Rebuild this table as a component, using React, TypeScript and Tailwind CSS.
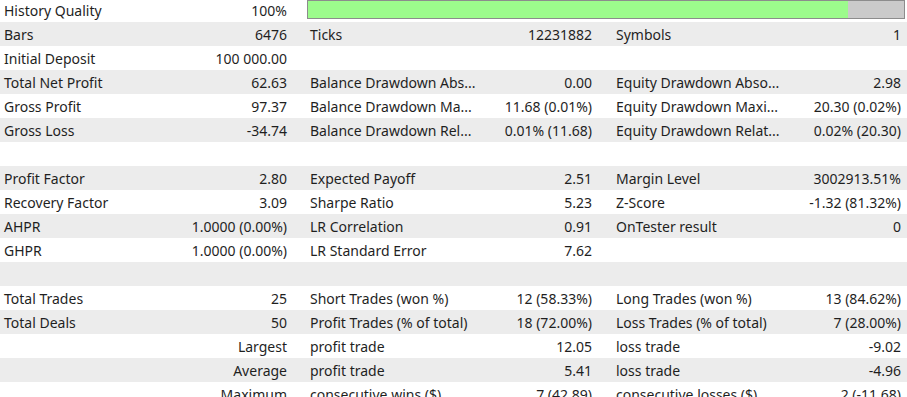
type Cell = { label?: string; value?: string };
type Row = { cells: [Cell, Cell, Cell]; shaded: boolean };

const r = (shaded: boolean, a: Cell, b: Cell = {}, c: Cell = {}): Row => ({ cells: [a, b, c], shaded });

const rows: Row[] = [
  r(true, { label: 'Bars', value: '6476' }, { label: 'Ticks', value: '12231882' }, { label: 'Symbols', value: '1' }),
  r(false, { label: 'Initial Deposit', value: '100 000.00' }),
  r(
    true,
    { label: 'Total Net Profit', value: '62.63' },
    { label: 'Balance Drawdown Abs...', value: '0.00' },
    { label: 'Equity Drawdown Abso...', value: '2.98' }
  ),
  r(
    false,
    { label: 'Gross Profit', value: '97.37' },
    { label: 'Balance Drawdown Ma...', value: '11.68 (0.01%)' },
    { label: 'Equity Drawdown Maxi...', value: '20.30 (0.02%)' }
  ),
  r(
    true,
    { label: 'Gross Loss', value: '-34.74' },
    { label: 'Balance Drawdown Rel...', value: '0.01% (11.68)' },
    { label: 'Equity Drawdown Relat...', value: '0.02% (20.30)' }
  ),
  r(false, {}),
  r(
    true,
    { label: 'Profit Factor', value: '2.80' },
    { label: 'Expected Payoff', value: '2.51' },
    { label: 'Margin Level', value: '3002913.51%' }
  ),
  r(
    false,
    { label: 'Recovery Factor', value: '3.09' },
    { label: 'Sharpe Ratio', value: '5.23' },
    { label: 'Z-Score', value: '-1.32 (81.32%)' }
  ),
  r(
    true,
    { label: 'AHPR', value: '1.0000 (0.00%)' },
    { label: 'LR Correlation', value: '0.91' },
    { label: 'OnTester result', value: '0' }
  ),
  r(false, { label: 'GHPR', value: '1.0000 (0.00%)' }, { label: 'LR Standard Error', value: '7.62' }),
  r(true, {}),
  r(
    false,
    { label: 'Total Trades', value: '25' },
    { label: 'Short Trades (won %)', value: '12 (58.33%)' },
    { label: 'Long Trades (won %)', value: '13 (84.62%)' }
  ),
  r(
    true,
    { label: 'Total Deals', value: '50' },
    { label: 'Profit Trades (% of total)', value: '18 (72.00%)' },
    { label: 'Loss Trades (% of total)', value: '7 (28.00%)' }
  ),
  r(false, { value: 'Largest' }, { label: 'profit trade', value: '12.05' }, { label: 'loss trade', value: '-9.02' }),
  r(true, { value: 'Average' }, { label: 'profit trade', value: '5.41' }, { label: 'loss trade', value: '-4.96' }),
  r(
    false,
    { value: 'Maximum' },
    { label: 'consecutive wins ($)', value: '7 (42.89)' },
    { label: 'consecutive losses ($)', value: '2 (-11.68)' }
  ),
];

// padding right per column so values end where the tester report puts them
const cellPad = ['pl-1 pr-[19px]', 'pl-1 pr-[20px]', 'pl-1 pr-[6px]'];

function StatCell({ cell, pad }: { cell: Cell; pad: string }) {
  return (
    <div className={`flex items-center justify-between whitespace-nowrap ${pad}`}>
      <span>{cell.label}</span>
      <span>{cell.value}</span>
    </div>
  );
}

export default function App() {
  return (
    <div
      className="w-[907px] h-[397px] overflow-hidden bg-white text-[14px] text-[#1f1f1f]"
      style={{ fontFamily: '"Noto Sans", "Open Sans", sans-serif' }}
    >
      {/* History quality with progress bar */}
      <div className="grid grid-cols-[306px_601px] h-[22px]">
        <div className={`flex items-center justify-between leading-[20px] ${cellPad[0]}`}>
          <span>History Quality</span>
          <span>100%</span>
        </div>
        <div className="pl-[1px] pr-[2px] pb-[3px]">
          <div className="flex h-full border border-[#8c8c8c]">
            <div className="w-[540px] bg-[#9cfb8c]" />
            <div className="flex-1 bg-[#cacaca]" />
          </div>
        </div>
      </div>

      {rows.map((row, i) => (
        <div
          key={i}
          className={`grid grid-cols-[306px_306px_295px] h-[24px] ${row.shaded ? 'bg-[#ececec]' : 'bg-white'}`}
        >
          {row.cells.map((cell, j) => (
            <StatCell key={j} cell={cell} pad={cellPad[j]} />
          ))}
        </div>
      ))}
    </div>
  );
}
